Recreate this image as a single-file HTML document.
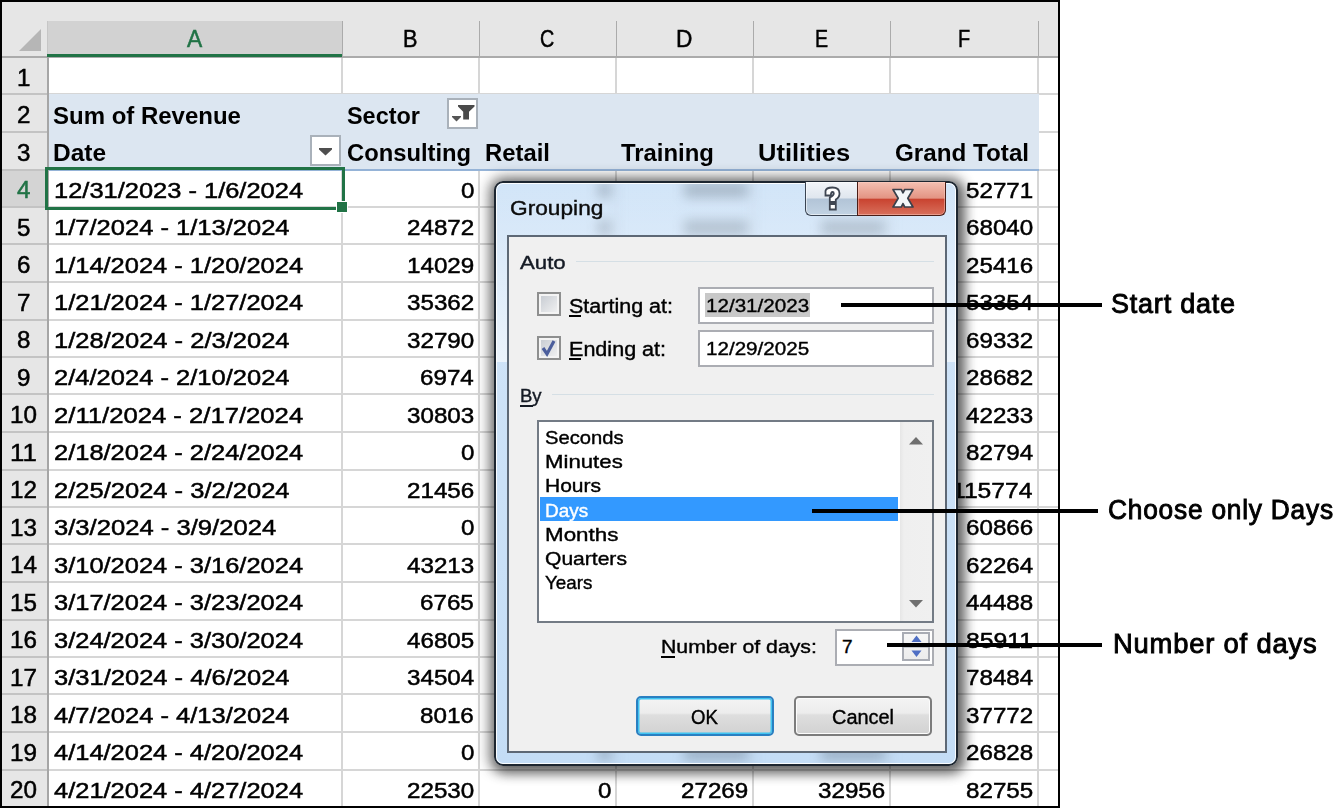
<!DOCTYPE html><html><head><meta charset="utf-8"><style>
html,body{margin:0;padding:0;background:#fff;}
body{width:1335px;height:812px;position:relative;overflow:hidden;font-family:"Liberation Sans",sans-serif;}
.t{position:absolute;white-space:nowrap;line-height:normal;transform-origin:0 0;-webkit-text-stroke:0.5px currentColor;}
.r{position:absolute;box-sizing:border-box;}
</style></head><body>
<div class="r" style="left:0px;top:0px;width:1060px;height:808px;background:#fff;"></div>
<div class="r" style="left:2px;top:2px;width:1056px;height:55px;background:#e6e6e6;"></div>
<div class="r" style="left:2px;top:57px;width:45px;height:749px;background:#e6e6e6;"></div>
<div class="r" style="left:47px;top:21px;width:295px;height:36px;background:#d2d2d2;"></div>
<div class="r" style="left:342px;top:21px;width:1px;height:36px;background:#ababab;"></div>
<div class="r" style="left:479px;top:21px;width:1px;height:36px;background:#ababab;"></div>
<div class="r" style="left:616px;top:21px;width:1px;height:36px;background:#ababab;"></div>
<div class="r" style="left:753px;top:21px;width:1px;height:36px;background:#ababab;"></div>
<div class="r" style="left:890px;top:21px;width:1px;height:36px;background:#ababab;"></div>
<div class="r" style="left:1038px;top:21px;width:1px;height:36px;background:#ababab;"></div>
<div class="r" style="left:47px;top:21px;width:1px;height:36px;background:#c6c6c6;"></div>
<div class="r" style="left:2px;top:56px;width:1056px;height:2px;background:#ababab;"></div>
<div class="r" style="left:47px;top:54px;width:295px;height:3px;background:#217346;"></div>
<svg style="position:absolute;left:0;top:0" width="60" height="60"><polygon points="19,51 41,29 41,51" fill="#b6b6b6"/></svg>
<div class="r" style="left:47px;top:57px;width:2px;height:749px;background:#a6a6a6;"></div>
<div class="r" style="left:2px;top:170px;width:44px;height:37px;background:#d4d4d4;"></div>
<div class="r" style="left:2px;top:93px;width:45px;height:2px;background:#c3c3c3;"></div>
<div class="r" style="left:2px;top:131px;width:45px;height:2px;background:#c3c3c3;"></div>
<div class="r" style="left:2px;top:169px;width:45px;height:2px;background:#c3c3c3;"></div>
<div class="r" style="left:2px;top:206px;width:45px;height:2px;background:#c3c3c3;"></div>
<div class="r" style="left:2px;top:243px;width:45px;height:2px;background:#c3c3c3;"></div>
<div class="r" style="left:2px;top:281px;width:45px;height:2px;background:#c3c3c3;"></div>
<div class="r" style="left:2px;top:319px;width:45px;height:2px;background:#c3c3c3;"></div>
<div class="r" style="left:2px;top:356px;width:45px;height:2px;background:#c3c3c3;"></div>
<div class="r" style="left:2px;top:393px;width:45px;height:2px;background:#c3c3c3;"></div>
<div class="r" style="left:2px;top:431px;width:45px;height:2px;background:#c3c3c3;"></div>
<div class="r" style="left:2px;top:469px;width:45px;height:2px;background:#c3c3c3;"></div>
<div class="r" style="left:2px;top:506px;width:45px;height:2px;background:#c3c3c3;"></div>
<div class="r" style="left:2px;top:543px;width:45px;height:2px;background:#c3c3c3;"></div>
<div class="r" style="left:2px;top:581px;width:45px;height:2px;background:#c3c3c3;"></div>
<div class="r" style="left:2px;top:619px;width:45px;height:2px;background:#c3c3c3;"></div>
<div class="r" style="left:2px;top:656px;width:45px;height:2px;background:#c3c3c3;"></div>
<div class="r" style="left:2px;top:693px;width:45px;height:2px;background:#c3c3c3;"></div>
<div class="r" style="left:2px;top:731px;width:45px;height:2px;background:#c3c3c3;"></div>
<div class="r" style="left:2px;top:769px;width:45px;height:2px;background:#c3c3c3;"></div>
<div class="r" style="left:2px;top:806px;width:45px;height:2px;background:#c3c3c3;"></div>
<div class="r" style="left:341px;top:58px;width:2px;height:748px;background:#d6d6d6;"></div>
<div class="r" style="left:478px;top:58px;width:2px;height:748px;background:#d6d6d6;"></div>
<div class="r" style="left:615px;top:58px;width:2px;height:748px;background:#d6d6d6;"></div>
<div class="r" style="left:752px;top:58px;width:2px;height:748px;background:#d6d6d6;"></div>
<div class="r" style="left:889px;top:58px;width:2px;height:748px;background:#d6d6d6;"></div>
<div class="r" style="left:1037px;top:58px;width:2px;height:748px;background:#d6d6d6;"></div>
<div class="r" style="left:49px;top:93px;width:1009px;height:2px;background:#d6d6d6;"></div>
<div class="r" style="left:49px;top:131px;width:1009px;height:2px;background:#d6d6d6;"></div>
<div class="r" style="left:49px;top:169px;width:1009px;height:2px;background:#d6d6d6;"></div>
<div class="r" style="left:49px;top:206px;width:1009px;height:2px;background:#d6d6d6;"></div>
<div class="r" style="left:49px;top:243px;width:1009px;height:2px;background:#d6d6d6;"></div>
<div class="r" style="left:49px;top:281px;width:1009px;height:2px;background:#d6d6d6;"></div>
<div class="r" style="left:49px;top:319px;width:1009px;height:2px;background:#d6d6d6;"></div>
<div class="r" style="left:49px;top:356px;width:1009px;height:2px;background:#d6d6d6;"></div>
<div class="r" style="left:49px;top:393px;width:1009px;height:2px;background:#d6d6d6;"></div>
<div class="r" style="left:49px;top:431px;width:1009px;height:2px;background:#d6d6d6;"></div>
<div class="r" style="left:49px;top:469px;width:1009px;height:2px;background:#d6d6d6;"></div>
<div class="r" style="left:49px;top:506px;width:1009px;height:2px;background:#d6d6d6;"></div>
<div class="r" style="left:49px;top:543px;width:1009px;height:2px;background:#d6d6d6;"></div>
<div class="r" style="left:49px;top:581px;width:1009px;height:2px;background:#d6d6d6;"></div>
<div class="r" style="left:49px;top:619px;width:1009px;height:2px;background:#d6d6d6;"></div>
<div class="r" style="left:49px;top:656px;width:1009px;height:2px;background:#d6d6d6;"></div>
<div class="r" style="left:49px;top:693px;width:1009px;height:2px;background:#d6d6d6;"></div>
<div class="r" style="left:49px;top:731px;width:1009px;height:2px;background:#d6d6d6;"></div>
<div class="r" style="left:49px;top:769px;width:1009px;height:2px;background:#d6d6d6;"></div>
<div class="r" style="left:49px;top:806px;width:1009px;height:2px;background:#d6d6d6;"></div>
<div class="r" style="left:49px;top:94px;width:990px;height:76px;background:#dce6f1;"></div>
<div class="r" style="left:49px;top:169px;width:990px;height:2px;background:#95b3d7;"></div>
<div class="t" style="left:186.81px;top:25.79px;font-size:23px;color:#217346;transform:scaleX(0.9919);">A</div>
<div class="t" style="left:403.31px;top:25.79px;font-size:23px;color:#000;transform:scaleX(0.9426);">B</div>
<div class="t" style="left:540.44px;top:25.79px;font-size:23px;color:#000;transform:scaleX(0.8561);">C</div>
<div class="t" style="left:676.38px;top:25.79px;font-size:23px;color:#000;transform:scaleX(0.9848);">D</div>
<div class="t" style="left:815.00px;top:25.79px;font-size:23px;color:#000;transform:scaleX(0.8525);">E</div>
<div class="t" style="left:957.94px;top:25.79px;font-size:23px;color:#000;transform:scaleX(0.8661);">F</div>
<div class="t" style="left:17.21px;top:64.78px;font-size:23px;color:#000;transform:scaleX(1.0490);">1</div>
<div class="t" style="left:17.21px;top:102.28px;font-size:23px;color:#000;transform:scaleX(1.0490);">2</div>
<div class="t" style="left:17.21px;top:139.78px;font-size:23px;color:#000;transform:scaleX(1.0490);">3</div>
<div class="t" style="left:17.21px;top:177.28px;font-size:23px;color:#217346;transform:scaleX(1.0490);">4</div>
<div class="t" style="left:17.21px;top:214.78px;font-size:23px;color:#000;transform:scaleX(1.0490);">5</div>
<div class="t" style="left:17.21px;top:252.29px;font-size:23px;color:#000;transform:scaleX(1.0490);">6</div>
<div class="t" style="left:17.21px;top:289.79px;font-size:23px;color:#000;transform:scaleX(1.0490);">7</div>
<div class="t" style="left:17.21px;top:327.29px;font-size:23px;color:#000;transform:scaleX(1.0490);">8</div>
<div class="t" style="left:17.21px;top:364.79px;font-size:23px;color:#000;transform:scaleX(1.0490);">9</div>
<div class="t" style="left:10.46px;top:402.29px;font-size:23px;color:#000;transform:scaleX(1.0539);">10</div>
<div class="t" style="left:10.46px;top:439.79px;font-size:23px;color:#000;transform:scaleX(1.1198);">11</div>
<div class="t" style="left:10.46px;top:477.29px;font-size:23px;color:#000;transform:scaleX(1.0539);">12</div>
<div class="t" style="left:10.46px;top:514.78px;font-size:23px;color:#000;transform:scaleX(1.0539);">13</div>
<div class="t" style="left:10.46px;top:552.28px;font-size:23px;color:#000;transform:scaleX(1.0539);">14</div>
<div class="t" style="left:10.46px;top:589.78px;font-size:23px;color:#000;transform:scaleX(1.0539);">15</div>
<div class="t" style="left:10.46px;top:627.28px;font-size:23px;color:#000;transform:scaleX(1.0539);">16</div>
<div class="t" style="left:10.46px;top:664.78px;font-size:23px;color:#000;transform:scaleX(1.0539);">17</div>
<div class="t" style="left:10.46px;top:702.28px;font-size:23px;color:#000;transform:scaleX(1.0539);">18</div>
<div class="t" style="left:10.46px;top:739.78px;font-size:23px;color:#000;transform:scaleX(1.0539);">19</div>
<div class="t" style="left:10.46px;top:777.28px;font-size:23px;color:#000;transform:scaleX(1.0539);">20</div>
<div class="t" style="left:53.00px;top:102.69px;font-size:23px;font-weight:bold;color:#000;transform:scaleX(1.0430);-webkit-text-stroke:0;">Sum of Revenue</div>
<div class="t" style="left:346.50px;top:102.69px;font-size:23px;font-weight:bold;color:#000;transform:scaleX(1.0182);-webkit-text-stroke:0;">Sector</div>
<div class="t" style="left:53.00px;top:140.38px;font-size:23px;font-weight:bold;color:#000;transform:scaleX(1.0653);-webkit-text-stroke:0;">Date</div>
<div class="t" style="left:347.30px;top:140.38px;font-size:23px;font-weight:bold;color:#000;transform:scaleX(1.0333);-webkit-text-stroke:0;">Consulting</div>
<div class="t" style="left:484.70px;top:140.38px;font-size:23px;font-weight:bold;color:#000;transform:scaleX(1.0359);-webkit-text-stroke:0;">Retail</div>
<div class="t" style="left:620.70px;top:140.38px;font-size:23px;font-weight:bold;color:#000;transform:scaleX(1.0391);-webkit-text-stroke:0;">Training</div>
<div class="t" style="left:758.30px;top:140.38px;font-size:23px;font-weight:bold;color:#000;transform:scaleX(1.1084);-webkit-text-stroke:0;">Utilities</div>
<div class="t" style="left:895.20px;top:140.38px;font-size:23px;font-weight:bold;color:#000;transform:scaleX(1.0530);-webkit-text-stroke:0;">Grand Total</div>
<div class="t" style="left:53.70px;top:177.74px;font-size:22.5px;color:#000;transform:scaleX(1.1311);">12/31/2023 - 1/6/2024</div>
<div class="t" style="left:460.57px;top:177.74px;font-size:22.5px;color:#000;transform:scaleX(1.0700);">0</div>
<div class="t" style="left:965.84px;top:177.74px;font-size:22.5px;color:#000;transform:scaleX(1.0740);">52771</div>
<div class="t" style="left:53.70px;top:215.24px;font-size:22.5px;color:#000;transform:scaleX(1.1342);">1/7/2024 - 1/13/2024</div>
<div class="t" style="left:406.84px;top:215.24px;font-size:22.5px;color:#000;transform:scaleX(1.0740);">24872</div>
<div class="t" style="left:965.84px;top:215.24px;font-size:22.5px;color:#000;transform:scaleX(1.0740);">68040</div>
<div class="t" style="left:53.70px;top:252.74px;font-size:22.5px;color:#000;transform:scaleX(1.1311);">1/14/2024 - 1/20/2024</div>
<div class="t" style="left:406.84px;top:252.74px;font-size:22.5px;color:#000;transform:scaleX(1.0740);">14029</div>
<div class="t" style="left:965.84px;top:252.74px;font-size:22.5px;color:#000;transform:scaleX(1.0740);">25416</div>
<div class="t" style="left:53.70px;top:290.24px;font-size:22.5px;color:#000;transform:scaleX(1.1311);">1/21/2024 - 1/27/2024</div>
<div class="t" style="left:406.84px;top:290.24px;font-size:22.5px;color:#000;transform:scaleX(1.0740);">35362</div>
<div class="t" style="left:965.84px;top:290.24px;font-size:22.5px;color:#000;transform:scaleX(1.0740);">53354</div>
<div class="t" style="left:53.70px;top:327.74px;font-size:22.5px;color:#000;transform:scaleX(1.1342);">1/28/2024 - 2/3/2024</div>
<div class="t" style="left:406.84px;top:327.74px;font-size:22.5px;color:#000;transform:scaleX(1.0740);">32790</div>
<div class="t" style="left:965.84px;top:327.74px;font-size:22.5px;color:#000;transform:scaleX(1.0740);">69332</div>
<div class="t" style="left:53.70px;top:365.24px;font-size:22.5px;color:#000;transform:scaleX(1.1342);">2/4/2024 - 2/10/2024</div>
<div class="t" style="left:420.27px;top:365.24px;font-size:22.5px;color:#000;transform:scaleX(1.0750);">6974</div>
<div class="t" style="left:965.84px;top:365.24px;font-size:22.5px;color:#000;transform:scaleX(1.0740);">28682</div>
<div class="t" style="left:53.70px;top:402.74px;font-size:22.5px;color:#000;transform:scaleX(1.1402);">2/11/2024 - 2/17/2024</div>
<div class="t" style="left:406.84px;top:402.74px;font-size:22.5px;color:#000;transform:scaleX(1.0740);">30803</div>
<div class="t" style="left:965.84px;top:402.74px;font-size:22.5px;color:#000;transform:scaleX(1.0740);">42233</div>
<div class="t" style="left:53.70px;top:440.24px;font-size:22.5px;color:#000;transform:scaleX(1.1311);">2/18/2024 - 2/24/2024</div>
<div class="t" style="left:460.57px;top:440.24px;font-size:22.5px;color:#000;transform:scaleX(1.0700);">0</div>
<div class="t" style="left:965.84px;top:440.24px;font-size:22.5px;color:#000;transform:scaleX(1.0740);">82794</div>
<div class="t" style="left:53.70px;top:477.74px;font-size:22.5px;color:#000;transform:scaleX(1.1342);">2/25/2024 - 3/2/2024</div>
<div class="t" style="left:406.84px;top:477.74px;font-size:22.5px;color:#000;transform:scaleX(1.0740);">21456</div>
<div class="t" style="left:952.41px;top:477.74px;font-size:22.5px;color:#000;transform:scaleX(1.0969);">115774</div>
<div class="t" style="left:53.70px;top:515.24px;font-size:22.5px;color:#000;transform:scaleX(1.1383);">3/3/2024 - 3/9/2024</div>
<div class="t" style="left:460.57px;top:515.24px;font-size:22.5px;color:#000;transform:scaleX(1.0700);">0</div>
<div class="t" style="left:965.84px;top:515.24px;font-size:22.5px;color:#000;transform:scaleX(1.0740);">60866</div>
<div class="t" style="left:53.70px;top:552.74px;font-size:22.5px;color:#000;transform:scaleX(1.1311);">3/10/2024 - 3/16/2024</div>
<div class="t" style="left:406.84px;top:552.74px;font-size:22.5px;color:#000;transform:scaleX(1.0740);">43213</div>
<div class="t" style="left:965.84px;top:552.74px;font-size:22.5px;color:#000;transform:scaleX(1.0740);">62264</div>
<div class="t" style="left:53.70px;top:590.24px;font-size:22.5px;color:#000;transform:scaleX(1.1311);">3/17/2024 - 3/23/2024</div>
<div class="t" style="left:420.27px;top:590.24px;font-size:22.5px;color:#000;transform:scaleX(1.0750);">6765</div>
<div class="t" style="left:965.84px;top:590.24px;font-size:22.5px;color:#000;transform:scaleX(1.0740);">44488</div>
<div class="t" style="left:53.70px;top:627.74px;font-size:22.5px;color:#000;transform:scaleX(1.1311);">3/24/2024 - 3/30/2024</div>
<div class="t" style="left:406.84px;top:627.74px;font-size:22.5px;color:#000;transform:scaleX(1.0740);">46805</div>
<div class="t" style="left:965.84px;top:627.74px;font-size:22.5px;color:#000;transform:scaleX(1.1004);">85911</div>
<div class="t" style="left:53.70px;top:665.24px;font-size:22.5px;color:#000;transform:scaleX(1.1342);">3/31/2024 - 4/6/2024</div>
<div class="t" style="left:406.84px;top:665.24px;font-size:22.5px;color:#000;transform:scaleX(1.0740);">34504</div>
<div class="t" style="left:965.84px;top:665.24px;font-size:22.5px;color:#000;transform:scaleX(1.0740);">78484</div>
<div class="t" style="left:53.70px;top:702.74px;font-size:22.5px;color:#000;transform:scaleX(1.1342);">4/7/2024 - 4/13/2024</div>
<div class="t" style="left:420.27px;top:702.74px;font-size:22.5px;color:#000;transform:scaleX(1.0750);">8016</div>
<div class="t" style="left:965.84px;top:702.74px;font-size:22.5px;color:#000;transform:scaleX(1.0740);">37772</div>
<div class="t" style="left:53.70px;top:740.24px;font-size:22.5px;color:#000;transform:scaleX(1.1311);">4/14/2024 - 4/20/2024</div>
<div class="t" style="left:460.57px;top:740.24px;font-size:22.5px;color:#000;transform:scaleX(1.0700);">0</div>
<div class="t" style="left:965.84px;top:740.24px;font-size:22.5px;color:#000;transform:scaleX(1.0740);">26828</div>
<div class="t" style="left:53.70px;top:777.74px;font-size:22.5px;color:#000;transform:scaleX(1.1311);">4/21/2024 - 4/27/2024</div>
<div class="t" style="left:406.84px;top:777.74px;font-size:22.5px;color:#000;transform:scaleX(1.0740);">22530</div>
<div class="t" style="left:965.84px;top:777.74px;font-size:22.5px;color:#000;transform:scaleX(1.0740);">82755</div>
<div class="t" style="left:597.57px;top:777.74px;font-size:22.5px;color:#000;transform:scaleX(1.0700);">0</div>
<div class="t" style="left:680.84px;top:777.74px;font-size:22.5px;color:#000;transform:scaleX(1.0740);">27269</div>
<div class="t" style="left:817.84px;top:777.74px;font-size:22.5px;color:#000;transform:scaleX(1.0740);">32956</div>
<div class="r" style="left:45px;top:167px;width:300px;height:43px;border:3px solid #217346;"></div>
<div class="r" style="left:336px;top:201px;width:12px;height:12px;background:#217346;border:1px solid #fff;"></div>
<div class="r" style="left:310px;top:135px;width:31px;height:31px;background:#fff;border:2px solid #a9b1ba;"></div>
<svg style="position:absolute;left:310px;top:136px" width="31" height="30"><polygon points="9,12 22,12 22,13.5 15.5,19.6 9,13.5" fill="#4f4f4f"/></svg>
<div class="r" style="left:447px;top:98px;width:31px;height:31px;background:#fff;border:2px solid #a9b1ba;"></div>
<svg style="position:absolute;left:447px;top:97px" width="31" height="32"><polygon points="11,8 27.5,8 27.5,9.5 22,14.7 22,22.6 16.2,22.6 16.2,14.7 11,9.5" fill="#4a4a4a"/><polygon points="5,19 14,19 14,20 9.5,24.6 5,20" fill="#555"/></svg>
<div class="r" style="left:0;top:0;width:1060px;height:808px;border:2px solid #000;"></div>
<div class="r" style="left:494px;top:181px;width:464px;height:585px;border-radius:8px;box-shadow:0 1px 13px 5px rgba(0,0,0,0.45),4px 4px 12px 3px rgba(0,0,0,0.35);border-radius:9px;"></div>
<div class="r" style="left:494px;top:181px;width:464px;height:585px;border-radius:9px;border:2px solid #1d2630;background:linear-gradient(180deg,#d2e5f8,#cbe1f7 300px,#c4ddf6);overflow:hidden;"><div style="position:absolute;left:-2px;top:-2px;width:464px;height:585px;filter:blur(6px);"><div style="position:absolute;left:104px;top:1.0999999999999943px;width:13px;height:16px;background:rgba(50,60,75,0.26)"></div><div style="position:absolute;left:190px;top:1.0999999999999943px;width:64px;height:16px;background:rgba(50,60,75,0.26)"></div><div style="position:absolute;left:378px;top:1.0999999999999943px;width:13px;height:16px;background:rgba(50,60,75,0.26)"></div><div style="position:absolute;left:104px;top:38.599999999999994px;width:13px;height:16px;background:rgba(50,60,75,0.26)"></div><div style="position:absolute;left:190px;top:38.599999999999994px;width:64px;height:16px;background:rgba(50,60,75,0.26)"></div><div style="position:absolute;left:327px;top:38.599999999999994px;width:64px;height:16px;background:rgba(50,60,75,0.26)"></div><div style="position:absolute;left:55px;top:76.10000000000002px;width:62px;height:16px;background:rgba(50,60,75,0.26)"></div><div style="position:absolute;left:190px;top:76.10000000000002px;width:64px;height:16px;background:rgba(50,60,75,0.26)"></div><div style="position:absolute;left:327px;top:76.10000000000002px;width:64px;height:16px;background:rgba(50,60,75,0.26)"></div><div style="position:absolute;left:55px;top:113.60000000000002px;width:62px;height:16px;background:rgba(50,60,75,0.26)"></div><div style="position:absolute;left:190px;top:113.60000000000002px;width:64px;height:16px;background:rgba(50,60,75,0.26)"></div><div style="position:absolute;left:327px;top:113.60000000000002px;width:64px;height:16px;background:rgba(50,60,75,0.26)"></div><div style="position:absolute;left:55px;top:151.10000000000002px;width:62px;height:16px;background:rgba(50,60,75,0.26)"></div><div style="position:absolute;left:190px;top:151.10000000000002px;width:64px;height:16px;background:rgba(50,60,75,0.26)"></div><div style="position:absolute;left:327px;top:151.10000000000002px;width:64px;height:16px;background:rgba(50,60,75,0.26)"></div><div style="position:absolute;left:55px;top:188.60000000000002px;width:62px;height:16px;background:rgba(50,60,75,0.26)"></div><div style="position:absolute;left:190px;top:188.60000000000002px;width:64px;height:16px;background:rgba(50,60,75,0.26)"></div><div style="position:absolute;left:327px;top:188.60000000000002px;width:64px;height:16px;background:rgba(50,60,75,0.26)"></div><div style="position:absolute;left:55px;top:226.10000000000002px;width:62px;height:16px;background:rgba(50,60,75,0.26)"></div><div style="position:absolute;left:190px;top:226.10000000000002px;width:64px;height:16px;background:rgba(50,60,75,0.26)"></div><div style="position:absolute;left:327px;top:226.10000000000002px;width:64px;height:16px;background:rgba(50,60,75,0.26)"></div><div style="position:absolute;left:104px;top:263.6px;width:13px;height:16px;background:rgba(50,60,75,0.26)"></div><div style="position:absolute;left:190px;top:263.6px;width:64px;height:16px;background:rgba(50,60,75,0.26)"></div><div style="position:absolute;left:327px;top:263.6px;width:64px;height:16px;background:rgba(50,60,75,0.26)"></div><div style="position:absolute;left:55px;top:301.1px;width:62px;height:16px;background:rgba(50,60,75,0.26)"></div><div style="position:absolute;left:190px;top:301.1px;width:64px;height:16px;background:rgba(50,60,75,0.26)"></div><div style="position:absolute;left:327px;top:301.1px;width:64px;height:16px;background:rgba(50,60,75,0.26)"></div><div style="position:absolute;left:104px;top:338.6px;width:13px;height:16px;background:rgba(50,60,75,0.26)"></div><div style="position:absolute;left:190px;top:338.6px;width:64px;height:16px;background:rgba(50,60,75,0.26)"></div><div style="position:absolute;left:327px;top:338.6px;width:64px;height:16px;background:rgba(50,60,75,0.26)"></div><div style="position:absolute;left:55px;top:376.1px;width:62px;height:16px;background:rgba(50,60,75,0.26)"></div><div style="position:absolute;left:190px;top:376.1px;width:64px;height:16px;background:rgba(50,60,75,0.26)"></div><div style="position:absolute;left:327px;top:376.1px;width:64px;height:16px;background:rgba(50,60,75,0.26)"></div><div style="position:absolute;left:55px;top:413.6px;width:62px;height:16px;background:rgba(50,60,75,0.26)"></div><div style="position:absolute;left:190px;top:413.6px;width:64px;height:16px;background:rgba(50,60,75,0.26)"></div><div style="position:absolute;left:327px;top:413.6px;width:64px;height:16px;background:rgba(50,60,75,0.26)"></div><div style="position:absolute;left:55px;top:451.1px;width:62px;height:16px;background:rgba(50,60,75,0.26)"></div><div style="position:absolute;left:190px;top:451.1px;width:64px;height:16px;background:rgba(50,60,75,0.26)"></div><div style="position:absolute;left:327px;top:451.1px;width:64px;height:16px;background:rgba(50,60,75,0.26)"></div><div style="position:absolute;left:55px;top:488.6px;width:62px;height:16px;background:rgba(50,60,75,0.26)"></div><div style="position:absolute;left:190px;top:488.6px;width:64px;height:16px;background:rgba(50,60,75,0.26)"></div><div style="position:absolute;left:327px;top:488.6px;width:64px;height:16px;background:rgba(50,60,75,0.26)"></div><div style="position:absolute;left:55px;top:526.1px;width:62px;height:16px;background:rgba(50,60,75,0.26)"></div><div style="position:absolute;left:190px;top:526.1px;width:64px;height:16px;background:rgba(50,60,75,0.26)"></div><div style="position:absolute;left:327px;top:526.1px;width:64px;height:16px;background:rgba(50,60,75,0.26)"></div><div style="position:absolute;left:104px;top:563.6px;width:13px;height:16px;background:rgba(50,60,75,0.26)"></div><div style="position:absolute;left:190px;top:563.6px;width:64px;height:16px;background:rgba(50,60,75,0.26)"></div><div style="position:absolute;left:327px;top:563.6px;width:64px;height:16px;background:rgba(50,60,75,0.26)"></div><div style="position:absolute;left:122px;top:0;width:1px;height:600px;background:rgba(120,130,140,0.35)"></div><div style="position:absolute;left:259px;top:0;width:1px;height:600px;background:rgba(120,130,140,0.35)"></div><div style="position:absolute;left:396px;top:0;width:1px;height:600px;background:rgba(120,130,140,0.35)"></div></div><div style="position:absolute;left:0;top:0;width:462px;height:179px;background:linear-gradient(180deg,rgba(255,255,255,0) 0%,rgba(255,255,255,0.25) 40%,rgba(255,255,255,0.6) 100%);"></div><div style="position:absolute;left:0;top:0;right:0;bottom:0;border-radius:7px;box-shadow:inset 0 0 0 1px rgba(255,255,255,0.9);"></div></div>
<div class="r" style="left:507px;top:235px;width:440px;height:518px;background:#f0f0f0;border:2px solid #5d6875;"></div>
<div class="t" style="left:509.50px;top:196.00px;font-size:21px;color:#0c0c0c;transform:scaleX(1.0809);-webkit-text-stroke:0.4px currentColor;">Grouping</div>
<div class="r" style="left:805px;top:182px;width:53px;height:34px;border:1px solid #3a4452;border-top:none;border-right:none;border-radius:0 0 0 6px;background:linear-gradient(180deg,#f2f5f9 0%,#dfe6ee 49%,#b2c4d7 51%,#c2d3e3 100%);box-shadow:inset 0 0 0 1px rgba(255,255,255,0.55);"></div>
<div class="r" style="left:857px;top:182px;width:89px;height:34px;border:1px solid #4a1d16;border-top:none;border-radius:0 0 6px 0;background:linear-gradient(180deg,#f4c0b2 0%,#e39483 49%,#c94330 52%,#d8705c 100%);box-shadow:inset 0 0 0 1px rgba(255,210,200,0.45);"></div>
<svg style="position:absolute;left:805px;top:182px" width="53" height="34"><path d="M20.5,13.5 L20.5,9 Q21,5.5 27.5,5.5 Q34.5,5.5 34.5,11.5 Q34.5,15.5 30.8,17.5 L30.8,20 L24.8,20 L24.8,15.5 Q28.8,13.5 28.8,11.5 Q28.8,10 27.5,10 Q26,10 25.8,13.5 Z M24.8,22 L30.8,22 L30.8,27.5 L24.8,27.5 Z" fill="#fff" stroke="#3f4652" stroke-width="1.8" stroke-linejoin="miter"/></svg>
<svg style="position:absolute;left:857px;top:182px" width="89" height="34"><path d="M36,7.5 L44.3,7.5 L46,10.8 L47.7,7.5 L56,7.5 L50.8,16.2 L56,25 L47.7,25 L46,21.6 L44.3,25 L36,25 L41.2,16.2 Z" fill="#f4f6f8" stroke="#3a404b" stroke-width="1.7" stroke-linejoin="round"/></svg>
<div class="t" style="left:519.70px;top:252.11px;font-size:19px;color:#141a24;transform:scaleX(1.1692);-webkit-text-stroke:0.4px currentColor;">Auto</div>
<div class="r" style="left:576px;top:261px;width:358px;height:1px;background:#d5dfe5;"></div>
<div class="t" style="left:519.80px;top:385.31px;font-size:19px;color:#141a24;transform:scaleX(0.9753);-webkit-text-stroke:0.4px currentColor;">By</div>
<div class="r" style="left:520px;top:405px;width:13px;height:2px;background:#141a24;"></div>
<div class="r" style="left:552px;top:394px;width:382px;height:1px;background:#d5dfe5;"></div>
<div class="r" style="left:537px;top:292px;width:24px;height:24px;border:2px solid #8e8f8f;background:linear-gradient(135deg,#c4c9d0,#f4f4f4);box-shadow:inset 0 0 0 2px #f4f4f4;"></div>
<div class="r" style="left:537px;top:336px;width:24px;height:24px;border:2px solid #8e8f8f;background:linear-gradient(135deg,#c4c9d0,#f4f4f4);box-shadow:inset 0 0 0 2px #f4f4f4;"></div>
<svg style="position:absolute;left:537px;top:336px" width="24" height="24"><path d="M6,12 L10,18 L17,5" fill="none" stroke="#4b5e9c" stroke-width="3.2"/></svg>
<div class="t" style="left:568.80px;top:295.20px;font-size:20px;color:#000;transform:scaleX(1.0749);-webkit-text-stroke:0.4px currentColor;">Starting at:</div>
<div class="r" style="left:569px;top:315px;width:12px;height:2px;background:#000;"></div>
<div class="t" style="left:568.80px;top:338.30px;font-size:20px;color:#000;transform:scaleX(1.0778);-webkit-text-stroke:0.4px currentColor;">Ending at:</div>
<div class="r" style="left:569px;top:358px;width:12px;height:2px;background:#000;"></div>
<div class="r" style="left:698px;top:287px;width:236px;height:37px;background:#fff;border:2px solid #abadb3;"></div>
<div class="r" style="left:705px;top:293px;width:105px;height:24px;background:#c8c8c8;"></div>
<div class="t" style="left:706.00px;top:294.91px;font-size:19px;color:#000;transform:scaleX(1.0842);-webkit-text-stroke:0.4px currentColor;">12/31/2023</div>
<div class="r" style="left:698px;top:330px;width:236px;height:37px;background:#fff;border:2px solid #abadb3;"></div>
<div class="t" style="left:706.00px;top:338.11px;font-size:19px;color:#000;transform:scaleX(1.0842);-webkit-text-stroke:0.4px currentColor;">12/29/2025</div>
<div class="r" style="left:537px;top:420px;width:397px;height:203px;background:#fff;border:2px solid #737b85;"></div>
<div class="r" style="left:900px;top:422px;width:32px;height:199px;background:linear-gradient(90deg,#e6e6e6,#efefef 4px,#f0f0f0);"></div>
<svg style="position:absolute;left:901px;top:422px" width="32" height="199"><polygon points="8,22.5 15,15 22,22.5" fill="#6f6f6f"/><polygon points="8,178 22,178 15,185.5" fill="#6f6f6f"/></svg>
<div class="r" style="left:540px;top:497px;width:358px;height:24px;background:#3399ff;"></div>
<div class="t" style="left:544.70px;top:427.20px;font-size:19px;color:#000;transform:scaleX(1.0635);-webkit-text-stroke:0.4px currentColor;">Seconds</div>
<div class="t" style="left:544.70px;top:450.91px;font-size:19px;color:#000;transform:scaleX(1.1684);-webkit-text-stroke:0.4px currentColor;">Minutes</div>
<div class="t" style="left:544.70px;top:475.11px;font-size:19px;color:#000;transform:scaleX(1.1054);-webkit-text-stroke:0.4px currentColor;">Hours</div>
<div class="t" style="left:544.70px;top:499.51px;font-size:19px;color:#fff;transform:scaleX(0.9965);-webkit-text-stroke:0.4px currentColor;">Days</div>
<div class="t" style="left:544.70px;top:523.80px;font-size:19px;color:#000;transform:scaleX(1.1775);-webkit-text-stroke:0.4px currentColor;">Months</div>
<div class="t" style="left:544.70px;top:548.00px;font-size:19px;color:#000;transform:scaleX(1.1081);-webkit-text-stroke:0.4px currentColor;">Quarters</div>
<div class="t" style="left:544.70px;top:572.20px;font-size:19px;color:#000;transform:scaleX(0.9896);-webkit-text-stroke:0.4px currentColor;">Years</div>
<div class="t" style="left:660.70px;top:636.40px;font-size:19px;color:#000;transform:scaleX(1.1183);-webkit-text-stroke:0.4px currentColor;">Number of days:</div>
<div class="r" style="left:661px;top:656px;width:14px;height:2px;background:#000;"></div>
<div class="r" style="left:835px;top:629px;width:99px;height:37px;background:#fff;border:2px solid #abadb3;"></div>
<div class="t" style="left:842.00px;top:636.40px;font-size:19px;color:#000;transform:scaleX(1.0000);-webkit-text-stroke:0.4px currentColor;">7</div>
<div class="r" style="left:902px;top:632px;width:28px;height:29px;border:2px solid #a9acb4;background:linear-gradient(#f7f7f7,#ececec);"></div>
<svg style="position:absolute;left:902px;top:632px" width="28" height="29"><polygon points="9.5,10 14.5,3.5 19.5,10" fill="#4f6fc4"/><polygon points="9.5,18.5 19.5,18.5 14.5,25" fill="#4f6fc4"/><line x1="2" y1="15" x2="26" y2="15" stroke="#b5b8bf" stroke-width="1.5"/></svg>
<div class="r" style="left:636px;top:696px;width:138px;height:40px;border:2px solid #2a7fc1;border-radius:5px;background:linear-gradient(#f4f4f4 0%,#ececec 42%,#dedede 47%,#d2d2d2 100%);box-shadow:inset 0 0 0 1.5px #3fc4f2;"></div>
<div class="t" style="left:691.40px;top:706.20px;font-size:20px;color:#000;transform:scaleX(0.9310);-webkit-text-stroke:0.4px currentColor;">OK</div>
<div class="r" style="left:794px;top:696px;width:138px;height:40px;border:2px solid #7c7c7c;border-radius:5px;background:linear-gradient(#f4f4f4 0%,#ececec 42%,#dedede 47%,#d2d2d2 100%);box-shadow:inset 0 0 0 1px #fcfcfc;"></div>
<div class="t" style="left:832.10px;top:706.20px;font-size:20px;color:#000;transform:scaleX(0.9960);-webkit-text-stroke:0.4px currentColor;">Cancel</div>
<div class="r" style="left:841px;top:303px;width:261px;height:4px;background:#000;"></div>
<div class="r" style="left:812px;top:509px;width:286px;height:4px;background:#000;"></div>
<div class="r" style="left:887px;top:643px;width:215px;height:4px;background:#000;"></div>
<div class="t" style="left:1111.10px;top:288.56px;font-size:27px;color:#000;transform:scaleX(0.9984);-webkit-text-stroke:0.9px #000;letter-spacing:0.8px;">Start date</div>
<div class="t" style="left:1108.40px;top:494.56px;font-size:27px;color:#000;transform:scaleX(0.9740);-webkit-text-stroke:0.9px #000;letter-spacing:0.8px;">Choose only Days</div>
<div class="t" style="left:1113.00px;top:628.96px;font-size:27px;color:#000;transform:scaleX(1.0134);-webkit-text-stroke:0.9px #000;letter-spacing:0.8px;">Number of days</div>
</body></html>
